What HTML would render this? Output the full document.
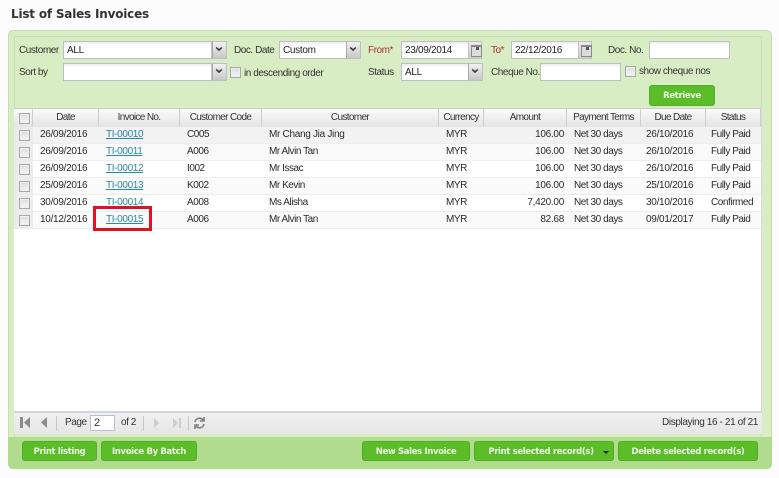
<!DOCTYPE html>
<html><head><meta charset="utf-8"><style>
html,body{margin:0;padding:0}
body{width:779px;height:478px;overflow:hidden;background:#fcfcfc;position:relative;font:10px "Liberation Sans",sans-serif;letter-spacing:-.45px;color:#333}
div,a,span{position:absolute;box-sizing:border-box;white-space:nowrap}
.l{line-height:14px;height:14px}
.f{background:linear-gradient(#eee,#fff 4px);border:1px solid #bcbfc6;height:18px;line-height:17px;padding-left:3px;letter-spacing:-.3px;color:#222}
.dd{background:linear-gradient(#f0f0f0,#c8c8c8);border:1px solid #bcbfc6;border-left-color:#aaa;width:15px;height:18px}
.dd:after{content:"";position:absolute;left:3px;top:3px;width:4px;height:4px;border:solid #333;border-width:0 2px 2px 0;transform:scale(.8,.7) rotate(45deg)}
.cal{background:linear-gradient(#ececec,#cfcfcf);border:1px solid #bcbfc6;width:14px;height:18px}
.cal:after{content:"";position:absolute;left:2px;top:3px;width:9px;height:9px;border:1px solid #8a8a8a;border-top-width:2px;background:#dcdcdc}
.cal:before{content:"";position:absolute;left:7px;top:5px;width:3px;height:3px;background:#555;z-index:1}
.cb{width:11px;height:11px;border:1px solid #a8a8a8;background:linear-gradient(#ddd,#f6f6f6);box-shadow:inset 0 0 0 1px #eee}
.h{top:108px;height:19px;background:linear-gradient(#fafafa,#e4e4e6);border-right:1px solid #cfd0d4;border-top:1px solid #ccc;text-align:center;line-height:18px;letter-spacing:-.65px}
.r{left:14px;width:747px;height:17px;border-bottom:1px solid #ededed;background:#fafafa}
.c{top:0;line-height:16px;height:16px;color:#2a2a2a}
.n{letter-spacing:-.28px}
.a{text-align:right}
a{position:static;color:#2a88a8;text-decoration:underline;letter-spacing:-.35px}
.g{height:20px;background:#5bbd28;border:1px solid #55ac2a;border-radius:3px;color:#eef8e4;font:bold 8.5px/20px "DejaVu Sans",sans-serif;letter-spacing:-.35px;text-align:center}
.s{width:1px;height:15px;background:#c8c8c8;top:416px}
.o{fill:#8a8a8a}
</style></head><body>
<div style="left:11px;top:5px;font:bold 12px/18px 'DejaVu Sans',sans-serif;letter-spacing:-.2px;color:#333">List of Sales Invoices</div>

<div style="left:8px;top:30px;width:764px;height:439px;background:#d8edc3;border:1px solid #c3e0aa;border-radius:5px"></div>
<div style="left:14px;top:36px;width:748px;height:402px;border:1px solid #c9dfb7"></div>
<div style="left:8px;top:437px;width:764px;height:32px;background:#b2dc8d;border-radius:0 0 5px 5px"></div>

<div class="l" style="left:19px;top:44px">Customer</div>
<div class="f" style="left:63px;top:41px;width:149px">ALL</div><div class="dd" style="left:212px;top:41px"></div>
<div class="l" style="left:234px;top:44px">Doc. Date</div>
<div class="f" style="left:279px;top:41px;width:68px">Custom</div><div class="dd" style="left:346px;top:41px"></div>
<div class="l" style="left:368px;top:44px;color:#a33">From*</div>
<div class="f" style="left:401px;top:41px;width:68px">23/09/2014</div><div class="cal" style="left:468px;top:41px"></div>
<div class="l" style="left:491px;top:44px;color:#a33">To*</div>
<div class="f" style="left:511px;top:41px;width:68px">22/12/2016</div><div class="cal" style="left:578px;top:41px"></div>
<div class="l" style="left:608px;top:44px">Doc. No.</div>
<div class="f" style="left:649px;top:41px;width:81px"></div>

<div class="l" style="left:19px;top:66px">Sort by</div>
<div class="f" style="left:63px;top:63px;width:149px"></div><div class="dd" style="left:212px;top:63px"></div>
<div class="cb" style="left:230px;top:67px"></div>
<div class="l" style="left:244px;top:67px">in descending order</div>
<div class="l" style="left:368px;top:66px">Status</div>
<div class="f" style="left:401px;top:63px;width:68px">ALL</div><div class="dd" style="left:468px;top:63px"></div>
<div class="l" style="left:491px;top:66px">Cheque No.</div>
<div class="f" style="left:540px;top:63px;width:81px"></div>
<div class="cb" style="left:625px;top:66px"></div>
<div class="l" style="left:639px;top:65px">show cheque nos</div>
<div class="g" style="left:649px;top:85px;width:66px;height:21px;line-height:21px">Retrieve</div>

<div style="left:14px;top:108px;width:748px;height:326px;background:#fff;border-right:1px solid #d8d8e4"></div>
<div class="h" style="left:14px;width:19px"></div><div class="cb" style="left:19px;top:113px"></div>
<div class="h" style="left:33px;width:66px">Date</div>
<div class="h" style="left:99px;width:81px">Invoice No.</div>
<div class="h" style="left:180px;width:82px">Customer Code</div>
<div class="h" style="left:262px;width:177px">Customer</div>
<div class="h" style="left:439px;width:45px">Currency</div>
<div class="h" style="left:484px;width:83px">Amount</div>
<div class="h" style="left:567px;width:74px">Payment Terms</div>
<div class="h" style="left:641px;width:65px">Due Date</div>
<div class="h" style="left:706px;width:55px">Status</div>

<div class="r" style="top:127px;background:#f2f2f2">
<div class="c n" style="left:26px">26/09/2016</div><div class="c" style="left:92px"><a>TI-00010</a></div><div class="c" style="left:173px">C005</div><div class="c" style="left:255px;letter-spacing:-.3px">Mr Chang Jia Jing</div><div class="c" style="left:432px">MYR</div><div class="c a n" style="left:470px;width:80px">106.00</div><div class="c" style="left:560px">Net 30 days</div><div class="c n" style="left:632px">26/10/2016</div><div class="c" style="left:697px">Fully Paid</div></div>
<div class="r" style="top:144px">
<div class="c n" style="left:26px">26/09/2016</div><div class="c" style="left:92px"><a>TI-00011</a></div><div class="c" style="left:173px">A006</div><div class="c" style="left:255px">Mr Alvin Tan</div><div class="c" style="left:432px">MYR</div><div class="c a n" style="left:470px;width:80px">106.00</div><div class="c" style="left:560px">Net 30 days</div><div class="c n" style="left:632px">26/10/2016</div><div class="c" style="left:697px">Fully Paid</div></div>
<div class="r" style="top:161px;background:#fff">
<div class="c n" style="left:26px">26/09/2016</div><div class="c" style="left:92px"><a>TI-00012</a></div><div class="c" style="left:173px">I002</div><div class="c" style="left:255px">Mr Issac</div><div class="c" style="left:432px">MYR</div><div class="c a n" style="left:470px;width:80px">106.00</div><div class="c" style="left:560px">Net 30 days</div><div class="c n" style="left:632px">26/10/2016</div><div class="c" style="left:697px">Fully Paid</div></div>
<div class="r" style="top:178px">
<div class="c n" style="left:26px">25/09/2016</div><div class="c" style="left:92px"><a>TI-00013</a></div><div class="c" style="left:173px">K002</div><div class="c" style="left:255px">Mr Kevin</div><div class="c" style="left:432px">MYR</div><div class="c a n" style="left:470px;width:80px">106.00</div><div class="c" style="left:560px">Net 30 days</div><div class="c n" style="left:632px">25/10/2016</div><div class="c" style="left:697px">Fully Paid</div></div>
<div class="r" style="top:195px;background:#fff">
<div class="c n" style="left:26px">30/09/2016</div><div class="c" style="left:92px"><a>TI-00014</a></div><div class="c" style="left:173px">A008</div><div class="c" style="left:255px">Ms Alisha</div><div class="c" style="left:432px">MYR</div><div class="c a n" style="left:470px;width:80px">7,420.00</div><div class="c" style="left:560px">Net 30 days</div><div class="c n" style="left:632px">30/10/2016</div><div class="c" style="left:697px">Confirmed</div></div>
<div class="r" style="top:212px">
<div class="c n" style="left:26px">10/12/2016</div><div class="c" style="left:92px"><a>TI-00015</a></div><div class="c" style="left:173px">A006</div><div class="c" style="left:255px">Mr Alvin Tan</div><div class="c" style="left:432px">MYR</div><div class="c a n" style="left:470px;width:80px">82.68</div><div class="c" style="left:560px">Net 30 days</div><div class="c n" style="left:632px">09/01/2017</div><div class="c" style="left:697px">Fully Paid</div></div>

<div style="left:14px;top:127px;width:19px;height:102px;background:#ececec"></div>
<div class="cb" style="left:19px;top:130px"></div>
<div class="cb" style="left:19px;top:147px"></div>
<div class="cb" style="left:19px;top:164px"></div>
<div class="cb" style="left:19px;top:181px"></div>
<div class="cb" style="left:19px;top:198px"></div>
<div class="cb" style="left:19px;top:215px"></div>

<div style="left:93px;top:206px;width:59px;height:25px;border:3px solid #e2111f"></div>

<div style="left:14px;top:411px;width:748px;height:23px;background:linear-gradient(#f0f0f0,#e6e6e6);border-top:2px solid #d4d4dc"></div>
<svg style="position:absolute;left:18px;top:416px" width="190" height="14">
<path class="o" d="M2 1h3v11H2zM12 1v11L6 6.500z"/><path class="o" d="M29 1v11l-6-5.500z"/>
<path d="M136 2v10l5-5z" fill="#ccc"/><path d="M155 2v10l5-5zM161 2h2v10h-2z" fill="#ccc"/>
<path d="M177 6a4.500 4.500 0 0 1 8-2M186 1v4h-4M186 8a4.500 4.500 0 0 1-8 2M177 13V9h4" fill="none" stroke="#7f7f7f" stroke-width="1.600"/></svg>
<div class="s" style="left:56px"></div>
<div class="l" style="left:65px;top:416px">Page</div>
<div style="left:90px;top:415px;width:25px;height:16px;background:#fff;border:1px solid #b8c0d4;line-height:15px;padding-left:3px;font-size:11px">2</div>
<div class="l" style="left:121px;top:416px">of 2</div>
<div class="s" style="left:143px"></div>
<div class="s" style="left:188px"></div>
<div class="l" style="right:21px;top:416px;letter-spacing:-.38px">Displaying 16 - 21 of 21</div>

<div class="g" style="left:22px;top:441px;width:75px">Print listing</div>
<div class="g" style="left:101px;top:441px;width:96px">Invoice By Batch</div>
<div class="g" style="left:362px;top:441px;width:108px">New Sales Invoice</div>
<div class="g" style="left:474px;top:441px;width:140px;padding-right:6px">Print selected record(s)<span style="right:4px;top:9px;width:0;height:0;border:3px solid transparent;border-top:3px solid #222"></span></div>
<div class="g" style="left:618px;top:441px;width:140px">Delete selected record(s)</div>
</body></html>
